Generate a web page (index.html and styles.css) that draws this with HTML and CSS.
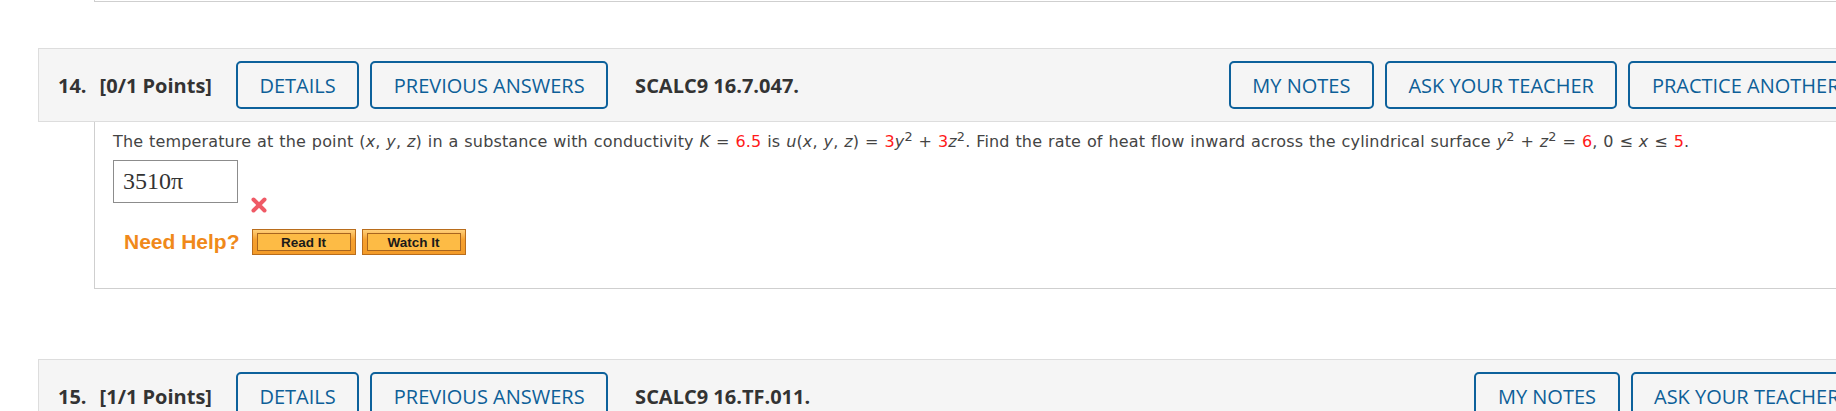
FILE: index.html
```html
<!DOCTYPE html>
<html>
<head>
<meta charset="utf-8">
<link rel="stylesheet" href="styles.css">
</head>
<body>
<div class="prev"></div>

<div class="question q14">
  <div class="qhead">
    <span class="qnum">14.</span>
    <span class="qpts">[0/1 Points]</span>
    <div class="btns">
      <span class="btn">DETAILS</span>
      <span class="btn">PREVIOUS ANSWERS</span>
    </div>
    <span class="qcode">SCALC9 16.7.047.</span>
    <div class="btns right">
      <span class="btn">MY NOTES</span>
      <span class="btn">ASK YOUR TEACHER</span>
      <span class="btn">PRACTICE ANOTHER</span>
    </div>
  </div>
  <div class="qbody">
    <p class="prompt">The temperature at the point (<i>x</i>, <i>y</i>, <i>z</i>) in a substance with conductivity <i>K</i> = <span class="red">6.5</span> is <i>u</i>(<i>x</i>, <i>y</i>, <i>z</i>) = <span class="red">3</span><i>y</i><sup>2</sup> + <span class="red">3</span><i>z</i><sup>2</sup>. Find the rate of heat flow inward across the cylindrical surface <i>y</i><sup>2</sup> + <i>z</i><sup>2</sup> = <span class="red">6</span>, 0 ≤ <i>x</i> ≤ <span class="red">5</span>.</p>
    <div class="answer-row">
      <div class="answer-box">3510π</div>
      <svg class="wrong" width="16" height="16" viewBox="0 0 16 16">
        <path d="M2.5 2.5 L13.5 13.5 M13.5 2.5 L2.5 13.5" stroke="#ef5a66" stroke-width="4" stroke-linecap="round" fill="none"/>
      </svg>
    </div>
    <div class="help-row">
      <span class="need-help">Need Help?</span>
      <span class="help-btn"><span class="help-inner">Read It</span></span>
      <span class="help-btn"><span class="help-inner">Watch It</span></span>
    </div>
  </div>
</div>

<div class="question q15">
  <div class="qhead">
    <span class="qnum">15.</span>
    <span class="qpts">[1/1 Points]</span>
    <div class="btns">
      <span class="btn">DETAILS</span>
      <span class="btn">PREVIOUS ANSWERS</span>
    </div>
    <span class="qcode">SCALC9 16.TF.011.</span>
    <div class="btns right">
      <span class="btn">MY NOTES</span>
      <span class="btn">ASK YOUR TEACHER</span>
    </div>
  </div>
</div>
</body>
</html>
```
FILE: styles.css
```css
html, body {
  margin: 0;
  padding: 0;
  overflow: hidden;
  background: #ffffff;
}

body {
  font-family: "Open Sans", "Liberation Sans", sans-serif;
  width: 1836px;
  height: 411px;
}

.prev {
  margin-left: 94px;
  width: 1900px;
  height: 1px;
  border-left: 1px solid #cfcfcf;
  border-bottom: 1px solid #cfcfcf;
}

.question {
  margin-left: 38px;
  width: 1845px;
}

.q14 {
  margin-top: 46px;
}

.q15 {
  margin-top: 70px;
}

.qhead {
  box-sizing: border-box;
  height: 74px;
  display: flex;
  align-items: center;
  padding: 0 19px;
  background: #f5f5f5;
  border: 1px solid #dddddd;
  white-space: nowrap;
}

.qnum,
.qpts,
.qcode {
  font-size: 20px;
  font-weight: 700;
  color: #333333;
}

.qnum {
  margin-right: 13px;
}

.qpts {
  margin-right: 24px;
}

.btns {
  display: flex;
  gap: 11px;
}

.btns.right {
  margin-left: auto;
}

.qcode {
  margin-left: 27px;
}

.btn {
  box-sizing: border-box;
  height: 48px;
  display: inline-flex;
  align-items: center;
  padding: 0 21.5px;
  border: 2px solid #0d619b;
  border-radius: 5px;
  color: #0d5f98;
  font-size: 20px;
  font-weight: 400;
}

.qbody {
  box-sizing: border-box;
  margin-left: 56px;
  height: 167px;
  padding: 8px 0 0 18px;
  border-left: 1px solid #cfcfcf;
  border-bottom: 1px solid #cfcfcf;
  font-family: "DejaVu Sans", Verdana, sans-serif;
  color: #444444;
}

.prompt {
  margin: 0;
  font-size: 16px;
  line-height: 24px;
  white-space: nowrap;
  word-spacing: 0.6px;
  letter-spacing: 0.15px;
}

.prompt sup {
  font-size: 0.8em;
  line-height: 0;
  vertical-align: 0.45em;
}

.red {
  color: #ff1a1a;
}

.answer-row {
  display: flex;
  align-items: flex-start;
  margin-top: 6px;
}

.answer-box {
  box-sizing: border-box;
  width: 125px;
  height: 43px;
  border: 1px solid #8c8c8c;
  padding-left: 9px;
  font-family: "Liberation Serif", "DejaVu Serif", serif;
  font-size: 24px;
  line-height: 40px;
  color: #333333;
}

.wrong {
  display: block;
  margin-left: 13px;
  margin-top: 37px;
}

.help-row {
  display: flex;
  align-items: center;
  margin-top: 16px;
  margin-left: 11px;
}

.need-help {
  font-family: "Liberation Sans", Arial, sans-serif;
  font-size: 21px;
  font-weight: 700;
  color: #f0891a;
  line-height: 24px;
  margin-right: 12px;
}

.help-btn {
  box-sizing: border-box;
  width: 104px;
  height: 26px;
  padding: 3px 4px;
  margin-right: 6px;
  border: 1px solid #b96d1c;
  background: linear-gradient(#ffd07a, #f6a12f 40%, #f39b28);
  display: flex;
}

.help-inner {
  flex: 1;
  display: flex;
  align-items: center;
  justify-content: center;
  border: 1px solid #a8651f;
  background: #fdbb45;
  font-family: "Liberation Sans", Arial, sans-serif;
  font-size: 13.5px;
  font-weight: 700;
  color: #1a1a1a;
}
```
